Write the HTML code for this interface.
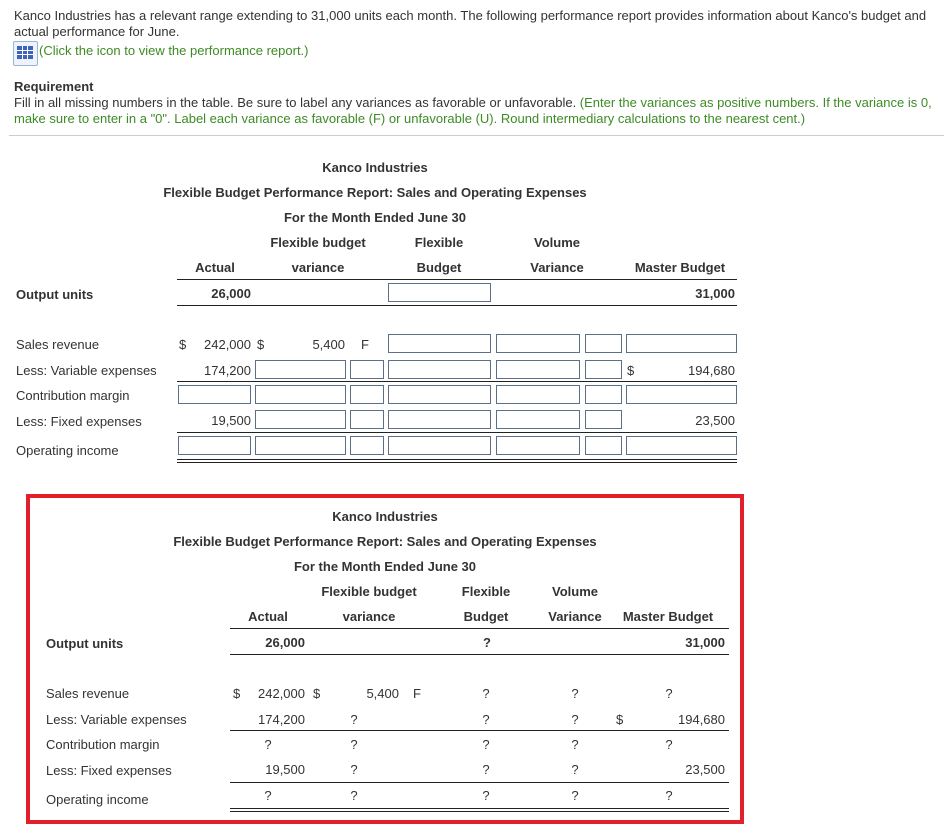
<!DOCTYPE html>
<html><head><meta charset="utf-8"><style>
body{margin:0;width:951px;height:831px;background:#fff;font-family:"Liberation Sans",Arial,sans-serif;font-size:13px;color:#333;position:relative;overflow:hidden}
.t{position:absolute;line-height:16px;white-space:nowrap}
.c{transform:translateX(-50%)}
.r{transform:translateX(-100%)}
.b{font-weight:bold}
.g{color:#3d8b25}
.ln{position:absolute;height:0;border-top:1.5px solid #222}
.bx{position:absolute;border:1px solid #5b7086;background:#fff;box-sizing:border-box}
.red{position:absolute;left:26px;top:494px;width:718px;height:330px;border:4px solid #e2202b;box-sizing:border-box}
</style></head><body>
<div class="t" style="left:14px;top:8px">Kanco Industries has a relevant range extending to 31,000 units each month. The following performance report provides information about Kanco's budget and</div>
<div class="t" style="left:14px;top:24px">actual performance for June.</div>
<div style="position:absolute;left:13px;top:41px;width:25px;height:25px;border:1px solid #9bb3d6;border-radius:2px;background:#eef3fb;box-sizing:border-box">
<svg width="23" height="23" viewBox="0 0 23 23" style="position:absolute;left:0;top:0"><rect x="3" y="4" width="16" height="13" fill="#3f63b8"/><g stroke="#fff" stroke-width="1"><line x1="3" y1="8.5" x2="19" y2="8.5"/><line x1="3" y1="12.5" x2="19" y2="12.5"/><line x1="8.5" y1="4" x2="8.5" y2="17"/><line x1="13.5" y1="4" x2="13.5" y2="17"/></g></svg></div>
<div class="t g" style="left:39px;top:43px">(Click the icon to view the performance report.)</div>
<div class="t b" style="left:14px;top:79px">Requirement</div>
<div class="t" style="left:14px;top:95px">Fill in all missing numbers in the table. Be sure to label any variances as favorable or unfavorable. <span class="g">(Enter the variances as positive numbers. If the variance is 0,</span></div>
<div class="t g" style="left:14px;top:111px">make sure to enter in a "0". Label each variance as favorable (F) or unfavorable (U). Round intermediary calculations to the nearest cent.)</div>
<div style="position:absolute;left:9px;top:135px;width:935px;border-top:1px solid #ccc"></div>

<!-- top table -->
<div class="t b c" style="left:375px;top:160px">Kanco Industries</div>
<div class="t b c" style="left:375px;top:185px">Flexible Budget Performance Report: Sales and Operating Expenses</div>
<div class="t b c" style="left:375px;top:210px">For the Month Ended June 30</div>
<div class="t b c" style="left:318px;top:235px">Flexible budget</div>
<div class="t b c" style="left:439px;top:235px">Flexible</div>
<div class="t b c" style="left:557px;top:235px">Volume</div>
<div class="t b c" style="left:215px;top:260px">Actual</div>
<div class="t b c" style="left:318px;top:260px">variance</div>
<div class="t b c" style="left:439px;top:260px">Budget</div>
<div class="t b c" style="left:557px;top:260px">Variance</div>
<div class="t b c" style="left:680px;top:260px">Master Budget</div>
<div class="ln" style="left:177px;top:279px;width:560px"></div>
<div class="t b" style="left:16px;top:287px">Output units</div>
<div class="t b r" style="left:251px;top:286px">26,000</div>
<div class="bx" style="left:388px;top:283px;width:103px;height:19px"></div>
<div class="t b r" style="left:735px;top:286px">31,000</div>
<div class="ln" style="left:177px;top:305px;width:560px"></div>

<div class="t" style="left:16px;top:337px">Sales revenue</div>
<div class="t" style="left:16px;top:363px">Less: Variable expenses</div>
<div class="t" style="left:16px;top:388px">Contribution margin</div>
<div class="t" style="left:16px;top:414px">Less: Fixed expenses</div>
<div class="t" style="left:16px;top:443px">Operating income</div>

<div class="t" style="left:179px;top:337px">$</div>
<div class="t r" style="left:251px;top:337px">242,000</div>
<div class="t" style="left:257px;top:337px">$</div>
<div class="t r" style="left:345px;top:337px">5,400</div>
<div class="t" style="left:361px;top:337px">F</div>
<div class="bx" style="left:388px;top:334px;width:103px;height:19px"></div>
<div class="bx" style="left:496px;top:334px;width:84px;height:19px"></div>
<div class="bx" style="left:585px;top:334px;width:37px;height:19px"></div>
<div class="bx" style="left:626px;top:334px;width:111px;height:19px"></div>

<div class="t r" style="left:251px;top:363px">174,200</div>
<div class="bx" style="left:255px;top:360px;width:91px;height:19px"></div>
<div class="bx" style="left:350px;top:360px;width:34px;height:19px"></div>
<div class="bx" style="left:388px;top:360px;width:103px;height:19px"></div>
<div class="bx" style="left:496px;top:360px;width:84px;height:19px"></div>
<div class="bx" style="left:585px;top:360px;width:37px;height:19px"></div>
<div class="t" style="left:627px;top:363px">$</div>
<div class="t r" style="left:735px;top:363px">194,680</div>
<div class="ln" style="left:177px;top:381px;width:560px"></div>

<div class="bx" style="left:178px;top:385px;width:73px;height:19px"></div>
<div class="bx" style="left:255px;top:385px;width:91px;height:19px"></div>
<div class="bx" style="left:350px;top:385px;width:34px;height:19px"></div>
<div class="bx" style="left:388px;top:385px;width:103px;height:19px"></div>
<div class="bx" style="left:496px;top:385px;width:84px;height:19px"></div>
<div class="bx" style="left:585px;top:385px;width:37px;height:19px"></div>
<div class="bx" style="left:626px;top:385px;width:111px;height:19px"></div>

<div class="t r" style="left:251px;top:413px">19,500</div>
<div class="bx" style="left:255px;top:410px;width:91px;height:19px"></div>
<div class="bx" style="left:350px;top:410px;width:34px;height:19px"></div>
<div class="bx" style="left:388px;top:410px;width:103px;height:19px"></div>
<div class="bx" style="left:496px;top:410px;width:84px;height:19px"></div>
<div class="bx" style="left:585px;top:410px;width:37px;height:19px"></div>
<div class="t r" style="left:735px;top:413px">23,500</div>
<div class="ln" style="left:177px;top:432px;width:560px"></div>

<div class="bx" style="left:178px;top:436px;width:73px;height:19px"></div>
<div class="bx" style="left:255px;top:436px;width:91px;height:19px"></div>
<div class="bx" style="left:350px;top:436px;width:34px;height:19px"></div>
<div class="bx" style="left:388px;top:436px;width:103px;height:19px"></div>
<div class="bx" style="left:496px;top:436px;width:84px;height:19px"></div>
<div class="bx" style="left:585px;top:436px;width:37px;height:19px"></div>
<div class="bx" style="left:626px;top:436px;width:111px;height:19px"></div>
<div class="ln" style="left:177px;top:459px;width:560px"></div>
<div class="ln" style="left:177px;top:462px;width:560px"></div>

<!-- bottom -->
<div class="red"></div>
<div class="t b c" style="left:385px;top:509px">Kanco Industries</div>
<div class="t b c" style="left:385px;top:534px">Flexible Budget Performance Report: Sales and Operating Expenses</div>
<div class="t b c" style="left:385px;top:559px">For the Month Ended June 30</div>
<div class="t b c" style="left:369px;top:584px">Flexible budget</div>
<div class="t b c" style="left:486px;top:584px">Flexible</div>
<div class="t b c" style="left:575px;top:584px">Volume</div>
<div class="t b c" style="left:268px;top:609px">Actual</div>
<div class="t b c" style="left:369px;top:609px">variance</div>
<div class="t b c" style="left:486px;top:609px">Budget</div>
<div class="t b c" style="left:575px;top:609px">Variance</div>
<div class="t b c" style="left:668px;top:609px">Master Budget</div>
<div class="ln" style="left:230px;top:628px;width:499px"></div>
<div class="t b" style="left:46px;top:636px">Output units</div>
<div class="t b r" style="left:305px;top:635px">26,000</div>
<div class="t b c" style="left:487px;top:635px">?</div>
<div class="t b r" style="left:725px;top:635px">31,000</div>
<div class="ln" style="left:230px;top:654px;width:499px"></div>

<div class="t" style="left:46px;top:686px">Sales revenue</div>
<div class="t" style="left:46px;top:712px">Less: Variable expenses</div>
<div class="t" style="left:46px;top:737px">Contribution margin</div>
<div class="t" style="left:46px;top:763px">Less: Fixed expenses</div>
<div class="t" style="left:46px;top:792px">Operating income</div>

<div class="t" style="left:233px;top:686px">$</div>
<div class="t r" style="left:305px;top:686px">242,000</div>
<div class="t" style="left:313px;top:686px">$</div>
<div class="t r" style="left:399px;top:686px">5,400</div>
<div class="t" style="left:413px;top:686px">F</div>
<div class="t c" style="left:486px;top:686px">?</div>
<div class="t c" style="left:575px;top:686px">?</div>
<div class="t c" style="left:669px;top:686px">?</div>

<div class="t r" style="left:305px;top:712px">174,200</div>
<div class="t c" style="left:354px;top:712px">?</div>
<div class="t c" style="left:486px;top:712px">?</div>
<div class="t c" style="left:575px;top:712px">?</div>
<div class="t" style="left:616px;top:712px">$</div>
<div class="t r" style="left:725px;top:712px">194,680</div>
<div class="ln" style="left:230px;top:730px;width:499px"></div>

<div class="t c" style="left:268px;top:737px">?</div>
<div class="t c" style="left:354px;top:737px">?</div>
<div class="t c" style="left:486px;top:737px">?</div>
<div class="t c" style="left:575px;top:737px">?</div>
<div class="t c" style="left:669px;top:737px">?</div>

<div class="t r" style="left:305px;top:762px">19,500</div>
<div class="t c" style="left:354px;top:762px">?</div>
<div class="t c" style="left:486px;top:762px">?</div>
<div class="t c" style="left:575px;top:762px">?</div>
<div class="t r" style="left:725px;top:762px">23,500</div>
<div class="ln" style="left:230px;top:782px;width:499px"></div>

<div class="t c" style="left:268px;top:788px">?</div>
<div class="t c" style="left:354px;top:788px">?</div>
<div class="t c" style="left:486px;top:788px">?</div>
<div class="t c" style="left:575px;top:788px">?</div>
<div class="t c" style="left:669px;top:788px">?</div>
<div class="ln" style="left:230px;top:808px;width:499px"></div>
<div class="ln" style="left:230px;top:811px;width:499px"></div>
</body></html>
